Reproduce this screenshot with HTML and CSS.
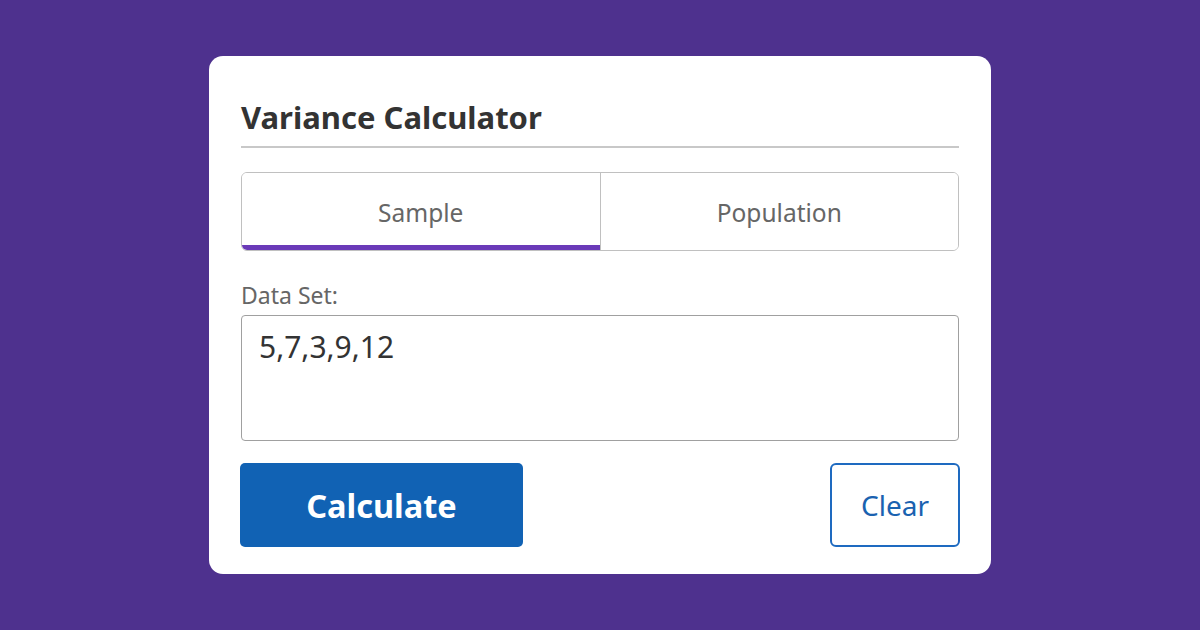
FILE: index.html
```html
<!DOCTYPE html>
<html lang="en">
<head>
    <meta charset="UTF-8">
    <meta name="viewport" content="width=device-width, initial-scale=1.0">
    <title>Variance Calculator</title>
    <link rel="stylesheet" href="styles.css">
</head>
<body>

    <div class="calculateur">
        <h1 class="titre">Variance Calculator</h1>
        <div class="onglets">
            <button class="onglet actif">Sample</button>
            <button class="onglet">Population</button>
        </div>
        <label class="etiquette" for="donnees">Data Set:</label>
        <textarea id="donnees" class="donnees">5,7,3,9,12</textarea>
        <div class="actions">
            <button class="bouton calculer">Calculate</button>
            <button class="bouton effacer">Clear</button>
        </div>
    </div>

</body>
</html>
```

FILE: styles.css
```css
*{
    padding: 0;
    margin: 0;
    box-sizing: border-box;
}

body{
    background-color: rgb(78, 49, 142);
    width: 100vw;
    height: 100vh;
    display: flex;
    justify-content: center;
    align-items: center;
    font-family: "Noto Sans", "Open Sans", sans-serif;
}

.calculateur{
    background-color: white;
    width: 782px;
    height: 518px;
    border-radius: 14px;
    padding: 39px 32px 27px 32px;
    display: flex;
    flex-direction: column;
}

.titre{
    font-size: 31px;
    font-weight: bold;
    color: rgb(51, 51, 51);
    line-height: 44px;
    padding-bottom: 7px;
    border-bottom: 2px solid rgb(200, 200, 200);
    margin-bottom: 24px;
}

.onglets{
    display: flex;
    height: 79px;
    border: 1px solid rgb(192, 192, 192);
    border-radius: 6px;
    overflow: hidden;
}

.onglet{
    flex: 1;
    border: none;
    outline: none;
    background-color: white;
    color: rgb(102, 102, 102);
    font-family: inherit;
    font-size: 24.5px;
    padding-top: 2px;
}

.onglet + .onglet{
    border-left: 1px solid rgb(192, 192, 192);
}

.onglet.actif{
    border-bottom: 5px solid rgb(106, 58, 184); /*barre sous l'onglet actif*/
    padding-top: 7px;
}

.etiquette{
    margin-top: 30px;
    font-size: 23px;
    color: rgb(102, 102, 102);
    line-height: 28px;
    margin-bottom: 6px;
}

.donnees{
    height: 127px;
    border: 1px solid rgb(160, 160, 160);
    border-radius: 4px;
    padding: 11px 17px;
    font-family: inherit;
    font-size: 30px;
    line-height: 40px;
    color: rgb(51, 51, 51);
    resize: none;
    outline: none;
}

.actions{
    display: flex;
    justify-content: space-between;
    margin-top: 22px;
}

.bouton{
    height: 84px;
    border-radius: 5px;
    font-family: inherit;
    outline: none;
}

.calculer{
    width: 283px;
    border: none;
    background-color: rgb(17, 98, 180);
    color: white;
    font-size: 32.5px;
    font-weight: bold;
    margin-left: -1px;
}

.effacer{
    width: 130px;
    border: 2px solid rgb(30, 106, 192);
    border-radius: 6px;
    background-color: white;
    color: rgb(26, 98, 176);
    font-size: 28px;
    margin-right: -1px;
}
```
